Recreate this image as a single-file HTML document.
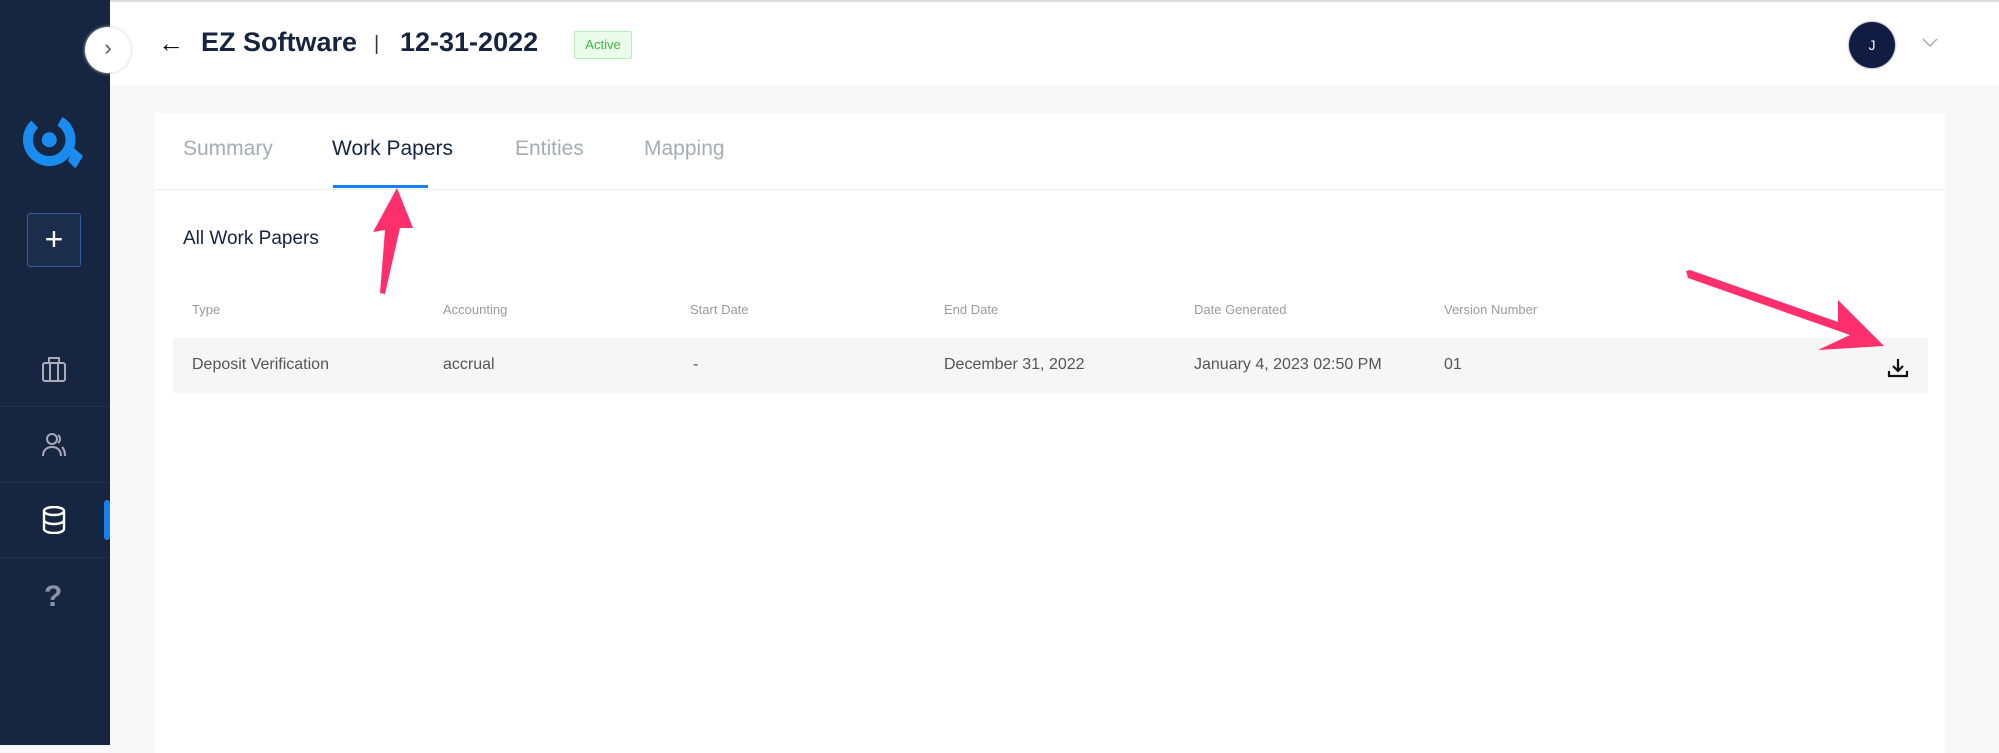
<!DOCTYPE html>
<html><head><meta charset="utf-8"><style>
*{margin:0;padding:0;box-sizing:border-box}
body{width:1999px;height:745px;overflow:hidden;background:#f8f8f8;font-family:"Liberation Sans",sans-serif;position:relative}
.abs{position:absolute}
#side{left:0;top:0;width:110px;height:745px;background:#172640}
#hdr{left:110px;top:0;width:1889px;height:85px;background:#fff;border-top:2px solid #ddd}
#card{left:155px;top:113px;width:1790px;height:640px;background:#fff}
.tab{top:24px;font-size:21px;color:#a8abb2}
.th{top:189px;font-size:13px;color:#9a9a9a}
.td{top:243px;font-size:16px;color:#555}
.sep{left:0;width:110px;height:1px;background:#22324d}
</style></head><body>
<div id="side" class="abs">
 <svg class="abs" style="left:18px;top:106px" width="70" height="70" viewBox="0 0 56 56"><circle cx="25" cy="27" r="17" fill="none" stroke="#1a8cf0" stroke-width="8" stroke-dasharray="85 22" transform="rotate(-60 25 27)"/><circle cx="25" cy="27" r="6" fill="#1a8cf0"/><path d="M44 33 L52 40 L46 50 L40 44Z" fill="#1a8cf0"/></svg>
 <div class="abs" style="left:27px;top:213px;width:54px;height:54px;border:1px solid #2f5ea0;border-radius:3px;background:#1b2d4a;color:#fff;font-size:32px;line-height:50px;text-align:center">+</div>
 <svg class="abs" style="left:41px;top:355px" width="26" height="28" viewBox="0 0 26 28" fill="none" stroke="#aab" stroke-width="2"><rect x="2" y="8" width="22" height="18" rx="2"/><path d="M8 8V3h10v5M9 8v18M17 8v18"/></svg>
 <div class="abs sep" style="top:406px"></div>
 <svg class="abs" style="left:41px;top:432px" width="26" height="26" viewBox="0 0 26 26" fill="none" stroke="#aab" stroke-width="2"><circle cx="11" cy="7" r="5"/><path d="M2 24c0-6 4-9 9-9s9 3 9 9M17 3a5 5 0 010 8M21 15c2 2 3 5 3 9"/></svg>
 <div class="abs sep" style="top:482px"></div>
 <svg class="abs" style="left:42px;top:506px" width="24" height="28" viewBox="0 0 24 28" fill="none" stroke="#fff" stroke-width="2.4"><ellipse cx="12" cy="5" rx="10" ry="4"/><path d="M2 5v18c0 2 4 4 10 4s10-2 10-4V5M2 14c0 2 4 4 10 4s10-2 10-4"/></svg>
 <div class="abs" style="left:104px;top:500px;width:6px;height:40px;background:#1a7ff0;border-radius:3px"></div>
 <div class="abs sep" style="top:557px"></div>
 <div class="abs" style="left:44px;top:580px;font-size:30px;font-weight:bold;color:#8a93a3">?</div>
</div>
<div id="hdr" class="abs">
 <div class="abs" style="left:-25px;top:25px;width:46px;height:46px;border-radius:50%;background:#fff;box-shadow:0 0 3px #ccc;color:#555;font-size:22px;text-align:center;line-height:42px">›</div>
 <div class="abs" style="left:48px;top:26px;font-size:26px;color:#111">←</div>
 <div class="abs" style="left:91px;top:25px;font-size:27px;font-weight:bold;color:#172440">EZ Software</div>
 <div class="abs" style="left:264px;top:31px;font-size:20px;color:#333">|</div>
 <div class="abs" style="left:290px;top:25px;font-size:27px;font-weight:bold;color:#172440">12-31-2022</div>
 <div class="abs" style="left:464px;top:29px;width:58px;height:28px;border:1px solid #b9ecb9;background:#ecfcec;color:#3bb83b;font-size:13px;text-align:center;line-height:26px;border-radius:2px">Active</div>
 <div class="abs" style="left:1739px;top:20px;width:46px;height:46px;border-radius:50%;background:#101c42;color:#fff;font-size:14px;text-align:center;line-height:46px;box-shadow:0 0 2px #667">J</div>
 <svg class="abs" style="left:1812px;top:36px" width="16" height="10" viewBox="0 0 16 10" fill="none" stroke="#aaa" stroke-width="1.5"><path d="M1 1l7 7 7-7"/></svg>
</div>
<div id="card" class="abs">
 <div class="abs tab" style="left:28px">Summary</div>
 <div class="abs tab" style="left:177px;color:#172440">Work Papers</div>
 <div class="abs tab" style="left:360px">Entities</div>
 <div class="abs tab" style="left:489px">Mapping</div>
 <div class="abs" style="left:178px;top:72px;width:95px;height:3px;background:#1a7ff0"></div>
 <div class="abs" style="left:0;top:76px;width:1790px;height:1px;background:#eee"></div>
 <div class="abs" style="left:28px;top:115px;font-size:19px;color:#172440">All Work Papers</div>
 <div class="abs th" style="left:37px">Type</div>
 <div class="abs th" style="left:288px">Accounting</div>
 <div class="abs th" style="left:535px">Start Date</div>
 <div class="abs th" style="left:789px">End Date</div>
 <div class="abs th" style="left:1039px">Date Generated</div>
 <div class="abs th" style="left:1289px">Version Number</div>
 <div class="abs" style="left:18px;top:225px;width:1755px;height:55px;background:#f6f6f6"></div>
 <div class="abs td" style="left:37px">Deposit Verification</div>
 <div class="abs td" style="left:288px">accrual</div>
 <div class="abs td" style="left:538px">-</div>
 <div class="abs td" style="left:789px">December 31, 2022</div>
 <div class="abs td" style="left:1039px">January 4, 2023 02:50 PM</div>
 <div class="abs td" style="left:1289px">01</div>
 <svg class="abs" style="left:1732px;top:244px" width="22" height="22" viewBox="0 0 22 22" fill="none" stroke="#111" stroke-width="2.2"><path d="M11 2v11M6 9l5 5 5-5M2 14v5h18v-5"/></svg>
</div>
<svg class="abs" style="left:0;top:0" width="1999" height="745" viewBox="0 0 1999 745">
 <path d="M380 293 L385 230 L373 232 L397 188 L413 228 L400 228 L385 294Z" fill="#ff2f6e"/>
 <path d="M1686 271 L1688 278 L1850 335 L1818 350 L1884 346 L1838 300 L1838 322 L1690 270Z" fill="#ff2f6e"/>
</svg>
</body></html>
